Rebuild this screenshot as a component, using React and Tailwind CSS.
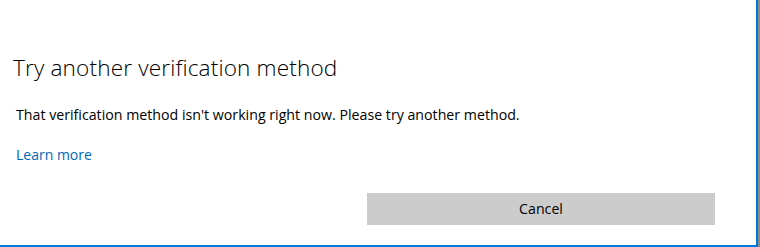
export default function App() {
  return (
    <div className="flex w-[760px] h-[247px] bg-white" style={{ fontFamily: '"Open Sans", "Noto Sans", sans-serif' }}>
      <div className="flex flex-col w-[758px] h-[247px] border-r-2 border-b-2 border-[#0078d7] bg-white">
        <h1 className="mt-[53px] ml-[13px] text-[22.6px] leading-[30px] tracking-[0.15px] text-black font-[350]">
          Try another verification method
        </h1>
        <p className="mt-[22px] ml-[16px] text-[14.2px] leading-[20px] text-black">
          That verification method isn't working right now. Please try another method.
        </p>
        <a className="mt-[20px] ml-[16px] text-[14px] leading-[20px] text-[#0067b8] w-fit">Learn more</a>
        <div className="flex justify-end mt-[28px] pr-[41px]">
          <button className="w-[348px] h-[32px] bg-[#cccccc] text-[14.2px] text-black">Cancel</button>
        </div>
      </div>
      <div className="w-[2px] h-full bg-[#8a8a8a]" />
    </div>
  );
}
